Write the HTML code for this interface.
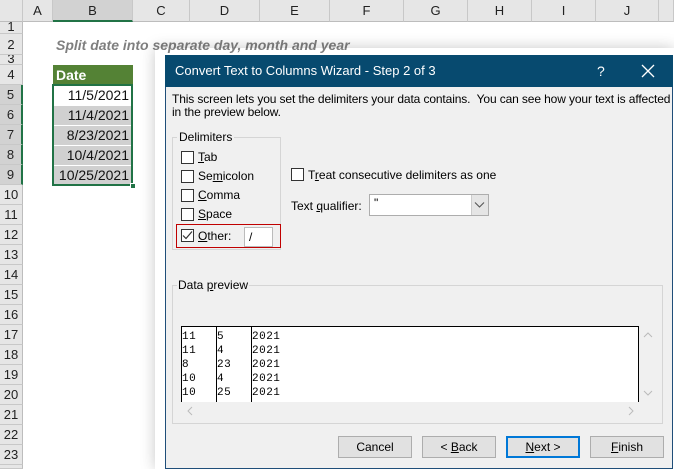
<!DOCTYPE html>
<html><head><style>
*{margin:0;padding:0;box-sizing:border-box}
body{width:674px;height:469px;overflow:hidden;background:#fff;font-family:"Liberation Sans",sans-serif;position:relative}
.a{position:absolute}
.hdr{background:#e6e6e6;color:#222;font-size:13px;text-align:center;line-height:22px;border-right:1px solid #c8c8c8;border-bottom:1px solid #bdbdbd}
.rh{background:#e6e6e6;color:#222;font-size:13px;text-align:center;border-bottom:1px solid #c8c8c8;border-right:1px solid #bdbdbd;left:0;width:23px}
.cell{font-size:14px;text-align:right;padding-right:3px;line-height:19px;border-bottom:1px solid #fff;color:#111}
.d{font-size:12px;color:#000;white-space:nowrap}
.cb{width:13px;height:13px;border:1px solid #333;background:#fff}
.btn{border:1px solid #adadad;background:#e1e1e1;font-size:12px;text-align:center;line-height:20px;height:22px;top:436px;width:74px}
.mono{font-family:"Liberation Mono",monospace;font-size:11px;line-height:14px}
u{text-decoration:underline}
</style></head><body>
<div class="a hdr" style="left:0;top:0;width:23px;height:22px"></div>
<div class="a hdr" style="left:23px;top:0;width:30px;height:22px">A</div>
<div class="a hdr" style="left:53px;top:0;width:80px;height:22px;background:#d2d2d2;border-bottom:2px solid #217346">B</div>
<div class="a hdr" style="left:133px;top:0;width:57px;height:22px">C</div>
<div class="a hdr" style="left:190px;top:0;width:70px;height:22px">D</div>
<div class="a hdr" style="left:260px;top:0;width:70px;height:22px">E</div>
<div class="a hdr" style="left:330px;top:0;width:74px;height:22px">F</div>
<div class="a hdr" style="left:404px;top:0;width:64px;height:22px">G</div>
<div class="a hdr" style="left:468px;top:0;width:64px;height:22px">H</div>
<div class="a hdr" style="left:532px;top:0;width:64px;height:22px">I</div>
<div class="a hdr" style="left:596px;top:0;width:63px;height:22px">J</div>
<div class="a hdr" style="left:659px;top:0;width:15px;height:22px"></div>
<div class="a rh" style="top:22px;height:12px;line-height:10px;overflow:hidden">1</div>
<div class="a rh" style="top:34px;height:21px;line-height:21px">2</div>
<div class="a rh" style="top:55px;height:10px;line-height:8px;overflow:hidden">3</div>
<div class="a rh" style="top:65px;height:20px;line-height:20px">4</div>
<div class="a rh" style="top:85px;height:20px;line-height:20px;background:#d2d2d2;border-right:2px solid #217346">5</div>
<div class="a rh" style="top:105px;height:20px;line-height:20px;background:#d2d2d2;border-right:2px solid #217346">6</div>
<div class="a rh" style="top:125px;height:20px;line-height:20px;background:#d2d2d2;border-right:2px solid #217346">7</div>
<div class="a rh" style="top:145px;height:20px;line-height:20px;background:#d2d2d2;border-right:2px solid #217346">8</div>
<div class="a rh" style="top:165px;height:20px;line-height:20px;background:#d2d2d2;border-right:2px solid #217346">9</div>
<div class="a rh" style="top:185px;height:20px;line-height:20px">10</div>
<div class="a rh" style="top:205px;height:20px;line-height:20px">11</div>
<div class="a rh" style="top:225px;height:20px;line-height:20px">12</div>
<div class="a rh" style="top:245px;height:20px;line-height:20px">13</div>
<div class="a rh" style="top:265px;height:20px;line-height:20px">14</div>
<div class="a rh" style="top:285px;height:20px;line-height:20px">15</div>
<div class="a rh" style="top:305px;height:20px;line-height:20px">16</div>
<div class="a rh" style="top:325px;height:20px;line-height:20px">17</div>
<div class="a rh" style="top:345px;height:20px;line-height:20px">18</div>
<div class="a rh" style="top:365px;height:20px;line-height:20px">19</div>
<div class="a rh" style="top:385px;height:20px;line-height:20px">20</div>
<div class="a rh" style="top:405px;height:20px;line-height:20px">21</div>
<div class="a rh" style="top:425px;height:20px;line-height:20px">22</div>
<div class="a rh" style="top:445px;height:20px;line-height:20px">23</div>
<div class="a rh" style="top:465px;height:4px"></div>

<div class="a" style="left:56px;top:35px;font-size:14px;font-weight:bold;font-style:italic;color:#7f7f7f;white-space:nowrap;line-height:20px">Split date into separate day, month and year</div>
<div class="a" style="left:53px;top:65px;width:80px;height:20px;background:#548235;color:#fff;font-weight:bold;font-size:14px;line-height:21px;padding-left:3px">Date</div>
<div class="a cell" style="left:54px;top:86px;width:78px;height:20px;background:#fff">11/5/2021</div>
<div class="a cell" style="left:54px;top:106px;width:78px;height:20px;background:#d0d0d0">11/4/2021</div>
<div class="a cell" style="left:54px;top:126px;width:78px;height:20px;background:#d0d0d0">8/23/2021</div>
<div class="a cell" style="left:54px;top:146px;width:78px;height:20px;background:#d0d0d0">10/4/2021</div>
<div class="a cell" style="left:54px;top:166px;width:78px;height:20px;background:#d0d0d0">10/25/2021</div>
<div class="a" style="left:52px;top:84px;width:81px;height:102px;border:2px solid #217346"></div>
<div class="a" style="left:130px;top:183px;width:6px;height:6px;background:#217346;border:1px solid #fff"></div>

<div class="a" style="left:155px;top:48px;width:519px;height:421px;box-shadow:0 0 14px rgba(0,0,0,0.22)"></div>
<div class="a" style="left:165px;top:55px;width:508px;height:414px;background:#f0f0f0;border:1px solid #1f4e79"></div>
<div class="a" style="left:165px;top:55px;width:508px;height:32px;background:#074a6f;color:#fff;font-size:13px;line-height:32px;padding-left:10px">Convert Text to Columns Wizard - Step 2 of 3</div>
<div class="a" style="left:597px;top:55px;color:#fff;font-size:14px;line-height:32px">?</div>
<svg class="a" style="left:641px;top:64px" width="14" height="14"><path d="M1 1L13 13M13 1L1 13" stroke="#fff" stroke-width="1.3"/></svg>

<div class="a d" style="left:172px;top:93px;line-height:13px;letter-spacing:-0.12px">This screen lets you set the delimiters your data contains.&nbsp; You can see how your text is affected<br>in the preview below.</div>

<div class="a" style="left:172px;top:137px;width:109px;height:113px;border:1px solid #d5d5d5"></div>
<div class="a d" style="left:177px;top:130px;background:#f0f0f0;padding:0 2px;line-height:14px">Delimiters</div>
<div class="a cb" style="left:181px;top:151px"></div><div class="a d" style="left:198px;top:150px;line-height:14px"><u>T</u>ab</div>
<div class="a cb" style="left:181px;top:170px"></div><div class="a d" style="left:198px;top:169px;line-height:14px">Se<u>m</u>icolon</div>
<div class="a cb" style="left:181px;top:189px"></div><div class="a d" style="left:198px;top:188px;line-height:14px"><u>C</u>omma</div>
<div class="a cb" style="left:181px;top:208px"></div><div class="a d" style="left:198px;top:207px;line-height:14px"><u>S</u>pace</div>
<div class="a" style="left:176px;top:224px;width:105px;height:24px;border:1px solid #c00000"></div>
<div class="a cb" style="left:181px;top:229px"></div>
<svg class="a" style="left:182px;top:230px" width="11" height="11"><path d="M1 5.5L4 8.5L10 1.5" stroke="#333" stroke-width="1.2" fill="none"/></svg>
<div class="a d" style="left:198px;top:229px;line-height:14px"><u>O</u>ther:</div>
<div class="a" style="left:244px;top:227px;width:29px;height:20px;background:#fff;border:1px solid #bbb;font-size:12px;line-height:18px;padding-left:4px">/</div>

<div class="a cb" style="left:291px;top:168px"></div>
<div class="a d" style="left:308px;top:168px;line-height:14px">T<u>r</u>eat consecutive delimiters as one</div>
<div class="a d" style="left:291px;top:199px;line-height:14px">Text <u>q</u>ualifier:</div>
<div class="a" style="left:369px;top:194px;width:120px;height:22px;background:#fff;border:1px solid #adadad;font-size:12px;line-height:16px;padding-left:4px">"</div>
<div class="a" style="left:471px;top:195px;width:17px;height:20px;background:#e5e5e5;border-left:1px solid #ccc"></div>
<svg class="a" style="left:474px;top:201px" width="11" height="8"><path d="M1 1.5L5.5 6L10 1.5" stroke="#555" stroke-width="1.1" fill="none"/></svg>

<div class="a" style="left:172px;top:285px;width:491px;height:139px;border:1px solid #d5d5d5"></div>
<div class="a d" style="left:177px;top:278px;background:#f0f0f0;padding:0 1px;line-height:14px">Data <u>p</u>review</div>
<div class="a" style="left:181px;top:326px;width:458px;height:76px;background:#fff;border:1px solid #000;border-bottom:none"></div>
<div class="a" style="left:216px;top:327px;width:1px;height:75px;background:#000"></div>
<div class="a" style="left:251px;top:327px;width:1px;height:75px;background:#000"></div>
<div class="a mono" style="left:182px;top:330px;letter-spacing:0.5px">11<br>11<br>8<br>10<br>10</div>
<div class="a mono" style="left:217px;top:330px;letter-spacing:0.5px">5<br>4<br>23<br>4<br>25</div>
<div class="a mono" style="left:252px;top:330px;letter-spacing:0.5px">2021<br>2021<br>2021<br>2021<br>2021</div>
<svg class="a" style="left:643px;top:331px" width="10" height="7"><path d="M1 6L5 2L9 6" stroke="#bbb" fill="none"/></svg>
<svg class="a" style="left:643px;top:390px" width="10" height="7"><path d="M1 1L5 5L9 1" stroke="#bbb" fill="none"/></svg>
<svg class="a" style="left:186px;top:406px" width="7" height="10"><path d="M6 1L2 5L6 9" stroke="#bbb" fill="none"/></svg>
<svg class="a" style="left:628px;top:406px" width="7" height="10"><path d="M1 1L5 5L1 9" stroke="#bbb" fill="none"/></svg>

<div class="a btn" style="left:338px">Cancel</div>
<div class="a btn" style="left:422px">&lt; <u>B</u>ack</div>
<div class="a btn" style="left:506px;border:2px solid #0078d7;line-height:18px"><u>N</u>ext &gt;</div>
<div class="a btn" style="left:590px"><u>F</u>inish</div>
</body></html>
